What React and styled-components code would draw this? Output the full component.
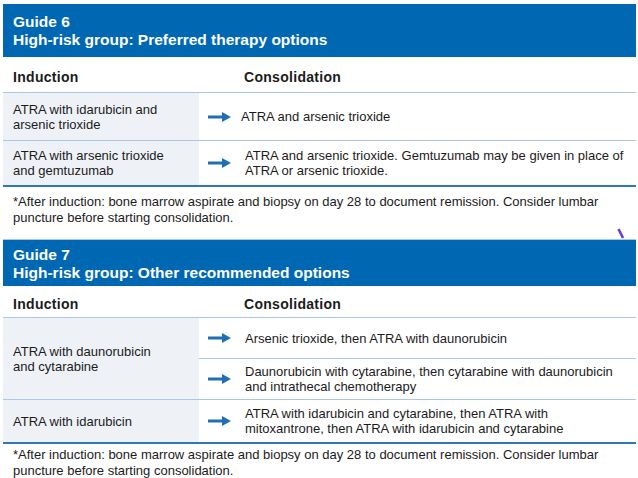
import React from 'react';
import styled, { createGlobalStyle } from 'styled-components';

const GlobalStyle = createGlobalStyle`
  body {
    margin: 0;
    background: #ffffff;
    font-family: "Liberation Sans", Arial, sans-serif;
    color: #1b1b1b;
  }
`;

const Page = styled.div`
  position: relative;
  width: 638px;
  height: 478px;
  overflow: hidden;
  padding: 4px 2px 0 3px;
  box-sizing: border-box;
`;

const Header = styled.div`
  background: #0068b3;
  color: #ffffff;
  font-weight: bold;
  font-size: 15.5px;
  line-height: 18px;
  padding: ${p => p.$pad};
  height: ${p => p.$height}px;
  box-sizing: border-box;
`;

const HeadRow = styled.div`
  display: grid;
  grid-template-columns: 196px 1fr;
  height: ${p => p.$height}px;
  align-items: center;
  padding-top: 5px;
  border-bottom: 1px solid #a9c8e6;
  font-weight: bold;
  font-size: 14px;
  letter-spacing: 0.3px;
  box-sizing: border-box;
`;

const HeadCell = styled.div`
  padding-left: ${p => p.$indent}px;
`;

const Row = styled.div`
  display: grid;
  grid-template-columns: 196px 1fr;
  border-bottom: ${p => (p.$last ? '2px solid #2f78b8' : '1px solid #a9c8e6')};
  font-size: 13px;
  line-height: 15px;
`;

const LeftCell = styled.div`
  background: #eef2f7;
  padding: 0 10px;
  display: flex;
  align-items: center;
`;

const RightStack = styled.div`
  display: flex;
  flex-direction: column;
`;

const RightCell = styled.div`
  display: flex;
  align-items: center;
  height: ${p => p.$height}px;
  padding-left: 9px;
  gap: ${p => p.$gap}px;
  border-top: ${p => (p.$divided ? '1px solid #a9c8e6' : 'none')};
  box-sizing: border-box;
`;

const Arrow = styled.svg`
  flex: none;
  width: 23px;
  height: 10px;
`;

const Note = styled.div`
  font-size: 13px;
  line-height: 16px;
  padding: ${p => p.$pad};
  height: ${p => p.$height}px;
  box-sizing: border-box;
  border-bottom: ${p => (p.$rule ? '1px solid #a9c8e6' : 'none')};
`;

const Mark = styled.svg`
  position: absolute;
  left: 616px;
  top: 228px;
  width: 10px;
  height: 11px;
`;

const RightArrow = () => (
  <Arrow viewBox="0 0 23 10">
    <rect x="0" y="3.5" width="15" height="3" fill="#1f6fb4" />
    <polygon points="14,0 23,5 14,10" fill="#1f6fb4" />
  </Arrow>
);

const Footnote = ({ height, pad, rule }) => (
  <Note $height={height} $pad={pad} $rule={rule}>
    *After induction: bone marrow aspirate and biopsy on day 28 to document remission. Consider lumbar
    <br />
    puncture before starting consolidation.
  </Note>
);

export default function App() {
  return (
    <Page>
      <GlobalStyle />

      <Header $height={53} $pad="9px 10px 0">
        Guide 6
        <br />
        High-risk group: Preferred therapy options
      </Header>
      <HeadRow $height={36}>
        <HeadCell $indent={10}>Induction</HeadCell>
        <HeadCell $indent={45}>Consolidation</HeadCell>
      </HeadRow>
      <Row>
        <LeftCell>
          ATRA with idarubicin and
          <br />
          arsenic trioxide
        </LeftCell>
        <RightStack>
          <RightCell $height={47} $gap={10}>
            <RightArrow />
            ATRA and arsenic trioxide
          </RightCell>
        </RightStack>
      </Row>
      <Row $last>
        <LeftCell>
          ATRA with arsenic trioxide
          <br />
          and gemtuzumab
        </LeftCell>
        <RightStack>
          <RightCell $height={44} $gap={14}>
            <RightArrow />
            <span>
              ATRA and arsenic trioxide. Gemtuzumab may be given in place of
              <br />
              ATRA or arsenic trioxide.
            </span>
          </RightCell>
        </RightStack>
      </Row>
      <Footnote height={53} pad="7px 10px 0" rule />

      <Header $height={46} $pad="6px 10px 0">
        Guide 7
        <br />
        High-risk group: Other recommended options
      </Header>
      <HeadRow $height={32}>
        <HeadCell $indent={10}>Induction</HeadCell>
        <HeadCell $indent={45}>Consolidation</HeadCell>
      </HeadRow>
      <Row>
        <LeftCell>
          ATRA with daunorubicin
          <br />
          and cytarabine
        </LeftCell>
        <RightStack>
          <RightCell $height={40} $gap={14}>
            <RightArrow />
            Arsenic trioxide, then ATRA with daunorubicin
          </RightCell>
          <RightCell $height={41} $gap={14} $divided>
            <RightArrow />
            <span>
              Daunorubicin with cytarabine, then cytarabine with daunorubicin
              <br />
              and intrathecal chemotherapy
            </span>
          </RightCell>
        </RightStack>
      </Row>
      <Row $last>
        <LeftCell>ATRA with idarubicin</LeftCell>
        <RightStack>
          <RightCell $height={42} $gap={14}>
            <RightArrow />
            <span>
              ATRA with idarubicin and cytarabine, then ATRA with
              <br />
              mitoxantrone, then ATRA with idarubicin and cytarabine
            </span>
          </RightCell>
        </RightStack>
      </Row>
      <Footnote height={36} pad="3px 10px 0" />

      <Mark viewBox="0 0 10 11">
        <line x1="2.5" y1="1" x2="7" y2="10" stroke="#6a3fd6" strokeWidth="2.6" />
      </Mark>
    </Page>
  );
}
